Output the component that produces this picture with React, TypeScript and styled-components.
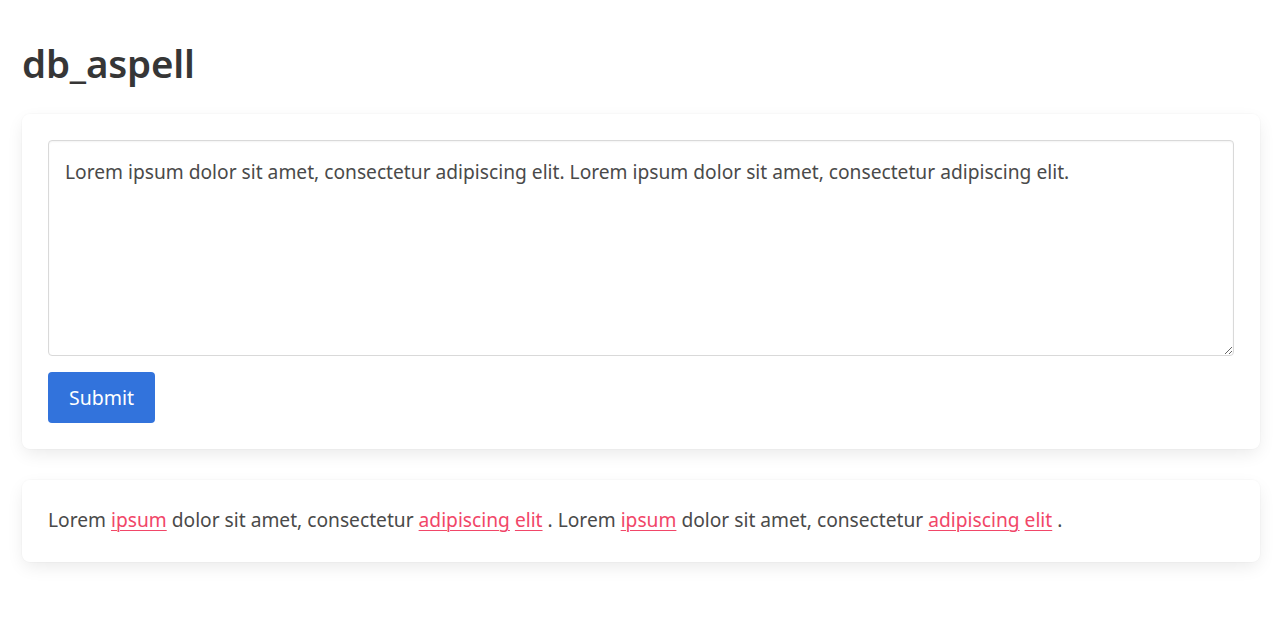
import React from "react";
import styled, { createGlobalStyle } from "styled-components";

const Global = createGlobalStyle`
  html, body { margin: 0; padding: 0; background: #fff; }
  body { font-family: "Noto Sans", "Open Sans", sans-serif; color: #4a4a4a; }
  * { box-sizing: border-box; }
`;

const Page = styled.main`
  padding: 40px 20px 22px 22px;
  display: flex;
  flex-direction: column;
  gap: 31px;
`;

const Title = styled.h1`
  margin: 0 0 -3px;
  font-size: 38.5px;
  font-weight: 600;
  line-height: 1.2;
  color: #363636;
  letter-spacing: -0.2px;
`;

const Box = styled.section<{ $pad: string }>`
  background: #fff;
  border-radius: 8px;
  box-shadow: 0 6px 18px -2px rgba(10, 10, 10, 0.09), 0 0 0 1px rgba(10, 10, 10, 0.015);
  padding: ${(p) => p.$pad};
  display: flex;
  flex-direction: column;
  align-items: flex-start;
`;

const Area = styled.textarea`
  width: 100%;
  height: 216px;
  border: 1px solid #d9d9d9;
  border-radius: 4px;
  padding: 17px 16px;
  font-family: inherit;
  font-size: 19.2px;
  line-height: 1.5;
  color: #4a4a4a;
  resize: vertical;
  box-shadow: inset 0 1px 2px rgba(10, 10, 10, 0.05);
  outline: none;
  margin: 0 0 16px;
`;

const Button = styled.button`
  background: #3273dc;
  color: #fff;
  border: none;
  border-radius: 4px;
  height: 51px;
  padding: 0 21px;
  font-family: inherit;
  font-size: 19.5px;
  cursor: pointer;
`;

const Result = styled.p`
  margin: 0;
  font-size: 19.2px;
  line-height: 1.5;
  color: #4a4a4a;
`;

const Misspelled = styled.a`
  color: #f14668;
  text-decoration: underline;
  text-decoration-thickness: 1px;
  text-underline-offset: 3px;
`;

const text =
  "Lorem ipsum dolor sit amet, consectetur adipiscing elit. Lorem ipsum dolor sit amet, consectetur adipiscing elit.";

const words: { w: string; bad?: boolean }[] = [
  { w: "Lorem" },
  { w: "ipsum", bad: true },
  { w: "dolor sit amet, consectetur" },
  { w: "adipiscing", bad: true },
  { w: "elit", bad: true },
  { w: ". Lorem" },
  { w: "ipsum", bad: true },
  { w: "dolor sit amet, consectetur" },
  { w: "adipiscing", bad: true },
  { w: "elit", bad: true },
  { w: "." },
];

export default function App() {
  return (
    <>
      <Global />
      <Page>
        <Title>db_aspell</Title>
        <Box $pad="26px">
          <Area defaultValue={text} />
          <Button>Submit</Button>
        </Box>
        <Box $pad="26px 26px 27px">
          <Result>
            {words.map((x, i) => (
              <React.Fragment key={i}>
                {i > 0 ? " " : ""}
                {x.bad ? <Misspelled href="#">{x.w}</Misspelled> : x.w}
              </React.Fragment>
            ))}
          </Result>
        </Box>
      </Page>
    </>
  );
}
